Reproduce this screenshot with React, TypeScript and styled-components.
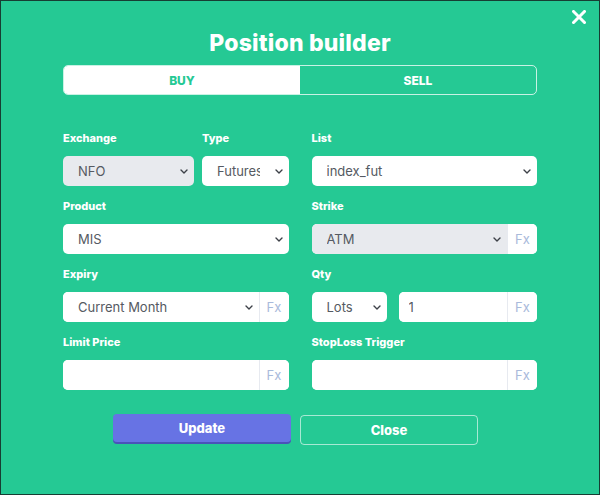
import styled, { createGlobalStyle } from "styled-components";

const GlobalStyle = createGlobalStyle`
  html, body {
    margin: 0;
    padding: 0;
  }

  body {
    font-family: Inter, "Noto Sans", "DejaVu Sans", sans-serif;
  }

  * {
    box-sizing: border-box;
  }
`;

type TOption = { value: string; label: string };

function Chevron() {
  return (
    <ChevronIcon width="8" height="5" viewBox="0 0 8 5" fill="none">
      <path d="M1 1L4 4L7 1" stroke="#3d4148" strokeWidth="1.4" strokeLinecap="round" strokeLinejoin="round" />
    </ChevronIcon>
  );
}

function Select({ options, disabled, grow }: { options: TOption[]; disabled?: boolean; grow?: boolean }) {
  return (
    <SelectWrap $grow={grow}>
      <SelectField disabled={disabled} defaultValue={options[0].value} $disabled={disabled}>
        {options.map((o) => (
          <option key={o.value} value={o.value}>
            {o.label}
          </option>
        ))}
      </SelectField>
      <Chevron />
    </SelectWrap>
  );
}

export default function App() {
  return (
    <>
      <GlobalStyle />
      <Modal>
        <CloseIcon type="button" aria-label="close">
          <svg width="14" height="14" viewBox="0 0 14 14">
            <path d="M1.5 1.5L12.5 12.5M12.5 1.5L1.5 12.5" stroke="#fff" strokeWidth="3" strokeLinecap="square" />
          </svg>
        </CloseIcon>

        <Title>Position builder</Title>

        <Toggle>
          <ToggleBtn type="button" $active>
            BUY
          </ToggleBtn>
          <ToggleBtn type="button">SELL</ToggleBtn>
        </Toggle>

        <Form>
          <Field>
            <SplitRow $cols="131px 1fr" $gap={8}>
              <Field>
                <Label>Exchange</Label>
                <Select disabled options={[{ value: "NFO", label: "NFO" }]} />
              </Field>
              <Field>
                <Label>Type</Label>
                <Select options={[{ value: "fut", label: "Futures" }]} />
              </Field>
            </SplitRow>
          </Field>

          <Field>
            <Label>List</Label>
            <Select options={[{ value: "index_fut", label: "index_fut" }]} />
          </Field>

          <Field>
            <Label>Product</Label>
            <Select options={[{ value: "MIS", label: "MIS" }]} />
          </Field>

          <Field>
            <Label>Strike</Label>
            <Group>
              <Select disabled grow options={[{ value: "ATM", label: "ATM" }]} />
              <Fx>Fx</Fx>
            </Group>
          </Field>

          <Field>
            <Label>Expiry</Label>
            <Group>
              <Select grow options={[{ value: "cur", label: "Current Month" }]} />
              <Fx>Fx</Fx>
            </Group>
          </Field>

          <Field>
            <Label>Qty</Label>
            <SplitRow $cols="75px 1fr" $gap={12}>
              <Select options={[{ value: "lots", label: "Lots" }]} />
              <Group>
                <TextInput defaultValue="1" $pad={10} />
                <Fx>Fx</Fx>
              </Group>
            </SplitRow>
          </Field>

          <Field>
            <Label>Limit Price</Label>
            <Group>
              <TextInput />
              <Fx>Fx</Fx>
            </Group>
          </Field>

          <Field>
            <Label>StopLoss Trigger</Label>
            <Group>
              <TextInput />
              <Fx>Fx</Fx>
            </Group>
          </Field>
        </Form>

        <Actions>
          <UpdateBtn type="button">Update</UpdateBtn>
          <CloseBtn type="button">Close</CloseBtn>
        </Actions>
      </Modal>
    </>
  );
}

const Modal = styled.div`
  position: relative;
  width: 600px;
  height: 495px;
  padding: 28px 62px 0;
  background-color: #25c994;
  border: 1px solid #173d33;
  display: flex;
  flex-direction: column;
`;

const CloseIcon = styled.button`
  position: absolute;
  top: 9px;
  right: 13px;
  width: 14px;
  height: 14px;
  padding: 0;
  border: none;
  background: none;
  cursor: pointer;
  display: flex;

  svg {
    display: block;
  }
`;

const Title = styled.h1`
  margin: 0 0 8px;
  font-size: 23px;
  line-height: 28px;
  font-weight: 800;
  color: #fff;
  text-align: center;
  letter-spacing: 0.2px;
`;

const Toggle = styled.div`
  display: grid;
  grid-template-columns: 1fr 1fr;
  height: 30px;
  border: 1px solid rgba(255, 255, 255, 0.75);
  border-radius: 5px;
  overflow: hidden;
`;

const ToggleBtn = styled.button<{ $active?: boolean }>`
  border: none;
  cursor: pointer;
  font-family: inherit;
  font-size: 12px;
  font-weight: 800;
  color: ${({ $active }) => ($active ? "#25c994" : "#fff")};
  background-color: ${({ $active }) => ($active ? "#fff" : "transparent")};
`;

const Form = styled.div`
  margin-top: 36px;
  display: grid;
  grid-template-columns: 1fr 1fr;
  column-gap: 23px;
  row-gap: 13px;
`;

const Field = styled.div`
  display: flex;
  flex-direction: column;
  min-width: 0;
`;

const SplitRow = styled.div<{ $cols: string; $gap: number }>`
  display: grid;
  grid-template-columns: ${({ $cols }) => $cols};
  column-gap: ${({ $gap }) => $gap}px;
`;

const Label = styled.label`
  margin-bottom: 11px;
  font-size: 11px;
  line-height: 14px;
  font-weight: 800;
  color: #fff;
  white-space: nowrap;
`;

const SelectWrap = styled.div<{ $grow?: boolean }>`
  position: relative;
  min-width: 0;
  ${({ $grow }) => ($grow ? "flex: 1;" : "")}
`;

const SelectField = styled.select<{ $disabled?: boolean }>`
  appearance: none;
  display: block;
  width: 100%;
  height: 30px;
  padding: 0 29px 0 15px;
  border: none;
  border-radius: 5px;
  outline: none;
  font-family: Inter, "Noto Sans", sans-serif;
  font-size: 13px;
  color: #555a62;
  opacity: 1;
  background-color: ${({ $disabled }) => ($disabled ? "#e8eaee" : "#fff")};
`;

const ChevronIcon = styled.svg`
  position: absolute;
  right: 6px;
  top: 13px;
  pointer-events: none;
`;

const Group = styled.div`
  display: flex;
  height: 30px;
  border-radius: 5px;
  overflow: hidden;
  background-color: #fff;

  ${SelectField} {
    border-radius: 0;
  }
`;

const TextInput = styled.input<{ $pad?: number }>`
  flex: 1;
  min-width: 0;
  height: 30px;
  padding: 0 10px 0 ${({ $pad }) => $pad ?? 15}px;
  border: none;
  outline: none;
  font-family: Inter, "Noto Sans", sans-serif;
  font-size: 13px;
  color: #555a62;
  background-color: #fff;
`;

const Fx = styled.span`
  flex: 0 0 30px;
  display: flex;
  align-items: center;
  justify-content: center;
  border-left: 1px solid #e7eaf0;
  font-size: 13px;
  color: #a9badb;
  background-color: #fff;
`;

const Actions = styled.div`
  margin-top: 24px;
  padding: 0 59px 0 50px;
  display: grid;
  grid-template-columns: 1fr 1fr;
  column-gap: 9px;
  align-items: start;

  button {
    height: 30px;
    cursor: pointer;
    border-radius: 4px;
    font-family: inherit;
    font-size: 13px;
    font-weight: 800;
    color: #fff;
  }
`;

const UpdateBtn = styled.button`
  height: 28px !important;
  border: none;
  background-color: #6773e4;
  box-shadow: 0 2px 0 #4a53b8;
`;

const CloseBtn = styled.button`
  margin-top: 1px;
  background-color: transparent;
  border: 1px solid rgba(255, 255, 255, 0.6);
`;
